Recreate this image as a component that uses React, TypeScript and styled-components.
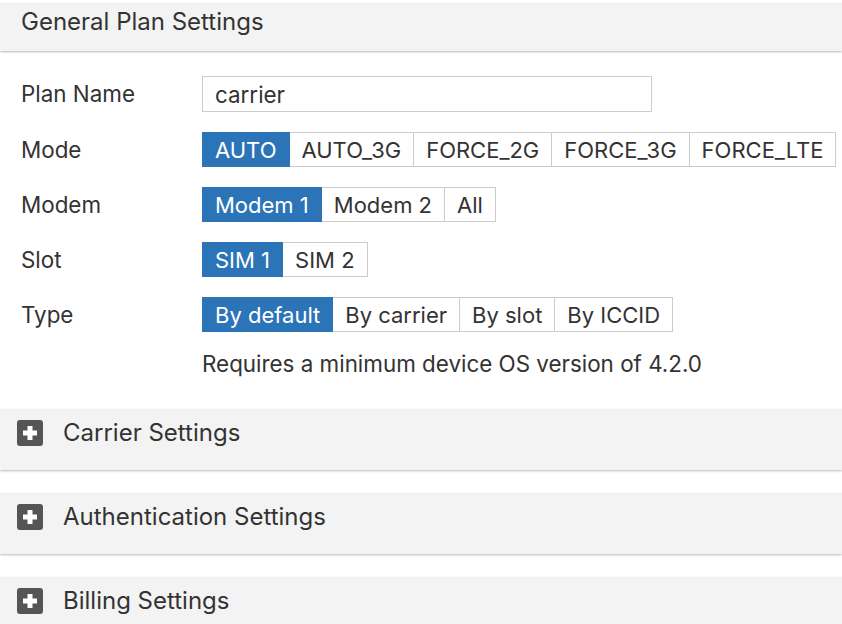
import React from "react";
import styled, { createGlobalStyle } from "styled-components";

const GlobalStyle = createGlobalStyle`
  html, body { margin: 0; padding: 0; background: #ffffff; }
  body { font-family: Inter, "Noto Sans", "Liberation Sans", sans-serif; color: #333333; }
  * { box-sizing: border-box; }
`;

const Page = styled.div`
  width: 842px;
  padding-top: 3px;
`;

const PanelHeader = styled.div`
  height: 48px;
  background: #f3f3f3;
  box-shadow: 0 1px 2px rgba(0, 0, 0, 0.28);
  padding: 5px 21px 0;
  font-size: 24px;
  line-height: 28px;
  color: #333;
`;

const Form = styled.div`
  display: flex;
  flex-direction: column;
  gap: 20px;
  padding: 25px 0 0 21px;
`;

const Row = styled.div`
  display: grid;
  grid-template-columns: 181px 1fr;
  align-items: center;
`;

const Label = styled.div`
  font-size: 22.4px;
  line-height: 28px;
  color: #333;
`;

const TextInput = styled.input`
  width: 450px;
  height: 36px;
  border: 1px solid #cccccc;
  padding: 1px 12px 0;
  font-family: inherit;
  font-size: 22.4px;
  color: #333;
  outline: none;
  background: #fff;
`;

const Group = styled.div`
  display: flex;
`;

const SegButton = styled.button<{ $active?: boolean }>`
  height: 35px;
  padding: 0 12px;
  margin-left: -1px;
  &:first-child { margin-left: 0; }
  border: 1px solid ${(p) => (p.$active ? "#2c74b8" : "#cccccc")};
  background: ${(p) => (p.$active ? "#2c74b8" : "#ffffff")};
  color: ${(p) => (p.$active ? "#ffffff" : "#333333")};
  font-family: inherit;
  font-size: 22px;
  line-height: 28px;
  cursor: pointer;
  position: relative;
  z-index: ${(p) => (p.$active ? 1 : 0)};
`;

const Note = styled.div`
  margin: -2px 0 0 181px;
  font-size: 22.4px;
  line-height: 28px;
  color: #333;
`;

const Sections = styled.div`
  display: flex;
  flex-direction: column;
  gap: 23px;
  margin-top: 31px;
`;

const Section = styled.div`
  height: 61px;
  background: #f3f3f3;
  box-shadow: 0 1px 2px rgba(0, 0, 0, 0.28);
  padding: 11px 17px 0;
  display: flex;
  align-items: flex-start;
  gap: 20px;
`;

const SectionTitle = styled.div`
  font-size: 24px;
  line-height: 26px;
  color: #333;
`;

const PlusIcon = () => (
  <svg width="26" height="26" viewBox="0 0 26 26" aria-hidden="true">
    <rect x="0" y="0" width="26" height="26" rx="3" fill="#555555" />
    <rect x="10.5" y="6" width="5" height="14" fill="#ffffff" />
    <rect x="6" y="10.5" width="14" height="5" fill="#ffffff" />
  </svg>
);

type SegProps = { options: string[]; active: string };
const Segmented: React.FC<SegProps> = ({ options, active }) => (
  <Group>
    {options.map((o) => (
      <SegButton key={o} $active={o === active}>
        {o}
      </SegButton>
    ))}
  </Group>
);

export default function App() {
  return (
    <>
      <GlobalStyle />
      <Page>
        <PanelHeader>General Plan Settings</PanelHeader>
        <Form>
          <Row>
            <Label>Plan Name</Label>
            <TextInput defaultValue="carrier" />
          </Row>
          <Row>
            <Label>Mode</Label>
            <Segmented
              options={["AUTO", "AUTO_3G", "FORCE_2G", "FORCE_3G", "FORCE_LTE"]}
              active="AUTO"
            />
          </Row>
          <Row>
            <Label>Modem</Label>
            <Segmented options={["Modem 1", "Modem 2", "All"]} active="Modem 1" />
          </Row>
          <Row>
            <Label>Slot</Label>
            <Segmented options={["SIM 1", "SIM 2"]} active="SIM 1" />
          </Row>
          <Row>
            <Label>Type</Label>
            <Segmented
              options={["By default", "By carrier", "By slot", "By ICCID"]}
              active="By default"
            />
          </Row>
          <Note>Requires a minimum device OS version of 4.2.0</Note>
        </Form>
        <Sections>
          {["Carrier Settings", "Authentication Settings", "Billing Settings"].map((t) => (
            <Section key={t}>
              <PlusIcon />
              <SectionTitle>{t}</SectionTitle>
            </Section>
          ))}
        </Sections>
      </Page>
    </>
  );
}
